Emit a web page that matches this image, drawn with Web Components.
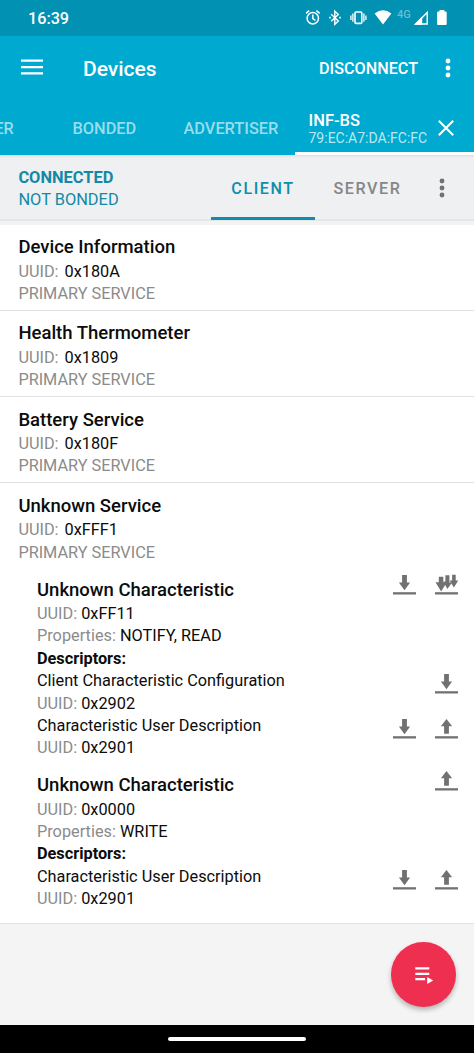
<!DOCTYPE html>
<html lang="en">
<head>
<meta charset="utf-8">
<title>Devices</title>
<style>
html,body{margin:0;padding:0}
body{width:474px;height:1053px;overflow:hidden;background:#f4f4f4;font-family:Roboto,sans-serif;color:#0c0c0c}
</style>
</head>
<body>
<ble-app></ble-app>
<script>
const define = (name, html) => customElements.define(name, class extends HTMLElement {
  constructor() {
    super();
    const t = document.createElement('template');
    t.innerHTML = html;
    this.attachShadow({mode: 'open'}).append(t.content.cloneNode(true));
  }
});

define('status-bar', `<style>
:host{display:flex;height:35.5px;background:#0091b3;color:#fff;align-items:center;box-sizing:border-box;padding-left:28px}
.time{flex:1;font-size:16.2px;font-weight:500;line-height:20px;padding-top:1.5px}
svg{display:block;width:168px;height:35px}
text{font:500 11px Roboto,sans-serif}
</style>
<span class="time">16:39</span>
<svg viewBox="306 0 168 35" fill="none" stroke="#fff">
  <g stroke-width="1.5"><circle cx="312.8" cy="18.3" r="5.7"/><path d="M312.8 14.6v4l2.6 1.7M305.9 13.4l3.3-2.8M319.7 13.4l-3.3-2.8"/></g>
  <path stroke-width="1.4" d="M331.2 14.3l7.1 6.8-3.5 3.3V11.2l3.5 3.3-7.1 6.8"/>
  <path stroke-width="1.6" d="M330 16.8v1.8M340 16.8v1.8"/>
  <rect x="355" y="12" width="6.8" height="11.4" rx="1" stroke-width="1.6"/>
  <path stroke-width="1.3" d="M352.9 13.6v8.2M363.9 13.6v8.2M350.9 15.4v4.6M365.9 15.4v4.6"/>
  <path fill="#fff" stroke="none" d="M374.6 13.6Q383 6.7 391.4 13.6L383 24.6z"/>
  <text x="397" y="18" fill="#6cbfd3" stroke="none">4G</text>
  <path stroke-width="1.4" d="M415.8 24L427.2 12.4V24z"/><path fill="#fff" stroke="none" d="M414 24.8L422.2 16.6V24.8z"/>
  <path fill="#fff" stroke="none" d="M439.5 10h4.8v1.5h1.4q1 0 1 1V24q0 1-1 1h-7.6q-1 0-1-1V12.500q0-1 1-1h1.400z"/>
</svg>`);

define('more-dots', `<style>:host{display:block;width:6px;height:20px}svg{display:block}</style>
<svg width="6" height="20" fill="currentColor"><circle cx="3" cy="3" r="2.450"/><circle cx="3" cy="10" r="2.450"/><circle cx="3" cy="17" r="2.450"/></svg>`);

define('app-toolbar', `<style>
:host{display:flex;height:65px;align-items:center;background:#00a9d0;color:#fff;padding:0 23px 0 21px;box-sizing:border-box;font-weight:500}
svg{margin-top:-2px}
.title{flex:1;margin-left:40px;font-size:21px;line-height:24px;padding-top:1px}
.action{font-size:16.200px;line-height:20px;padding-top:1.600px;margin-right:27px}
</style>
<svg width="22" height="16" fill="#fff"><path d="M0 .5h22v2.200H0zM0 7h22v2.200H0zM0 13.300h22v2.200H0z"/></svg>
<span class="title">Devices</span><span class="action">DISCONNECT</span><more-dots></more-dots>`);

define('device-tabs', `<style>
:host{display:flex;height:54.500px;background:#00a9d0;color:#98ddec;font-size:16.140px;overflow:hidden}
.tab{display:flex;align-items:center;line-height:20px;white-space:nowrap;padding-top:2px;box-sizing:border-box;font-weight:500}
.scan{width:72.500px;flex:none;justify-content:flex-start}
.er{margin-left:-5.500px}
.bonded{width:111px;flex:none}
.adv{flex:1;font-size:16.350px}
.bonded{font-size:16.350px}
.current{width:179px;flex:none;border-bottom:3px solid #fff;padding:0 20px 0 13.500px;justify-content:space-between}
.names{display:flex;flex-direction:column;padding-top:6px}
.name{font-size:16.500px;font-weight:500;color:#fff;line-height:18px}
.addr{font-size:14px;font-weight:400;line-height:17px;color:#b9e8f2}
svg{flex:none;margin-top:3px}
</style>
<div class="tab scan"><span class="er">ER</span></div>
<div class="tab bonded"><span>BONDED</span></div>
<div class="tab adv"><span>ADVERTISER</span></div>
<div class="tab current"><div class="names"><span class="name">INF-BS</span><span class="addr">79:EC:A7:DA:FC:FC</span></div>
<svg width="16" height="16" stroke="#fff" stroke-width="2.100"><path d="M.8.8l14.400 14.400M15.200.8L.8 15.200"/></svg></div>`);

define('connection-bar', `<style>
:host{display:flex;height:69.500px;box-sizing:border-box;border-bottom:4px solid #f3f3f3;background:linear-gradient(#dedfe0,#eef0f2 3px,#eff0f2 64px,#dcdddd 65px,#eee 66px);padding-left:18.400px;font-size:16.400px}
.state{width:192.300px;display:flex;flex-direction:column;color:#1489a6;padding-top:11.500px;line-height:22.400px}
b{font-weight:700}
.tab{height:65px;box-sizing:border-box;width:104.500px;display:flex;align-items:center;justify-content:center;font-size:16.140px;font-weight:500;letter-spacing:1.550px;color:#858688;padding-top:1.600px}
.on{color:#0d8eac;border-bottom:3.300px solid #0d8eac;padding-top:4.600px}
more-dots{color:#707173;margin:22.500px 0 0 19.200px}
</style>
<div class="state"><b>CONNECTED</b><span>NOT BONDED</span></div>
<div class="tab on">CLIENT</div><div class="tab">SERVER</div><more-dots></more-dots>`);

define('gatt-service', `<style>
:host{display:block;background:#fff;border-bottom:1px solid #e2e2e2;padding:10.600px 16.500px 4.400px 18.400px;font-size:16.300px;line-height:22.400px}
.name{font-size:18.500px;font-weight:500;line-height:25.400px}
.kind,.key{color:#8b8b8b}
.key{margin-right:6px}
</style>
<div class="name"><slot name="name"></slot></div>
<div><span class="key">UUID:</span><slot name="uuid"></slot></div>
<div class="kind">PRIMARY SERVICE</div>
<slot></slot>`);

define('gatt-characteristic', `<style>
:host{display:block;margin:13.600px 0 0 18.600px}
.head{display:flex;align-items:flex-start;justify-content:space-between;height:70.200px}
.actions{display:flex;gap:18.500px;margin-top:-2.500px}
.name{font-size:18.500px;font-weight:500;line-height:25.400px}
.key{color:#8b8b8b}
b{display:block;font-weight:700}
</style>
<div class="head"><div><div class="name">Unknown Characteristic</div>
<div><span class="key">UUID:</span> <slot name="uuid"></slot></div>
<div><span class="key">Properties:</span> <slot name="props"></slot></div></div>
<div class="actions"><slot name="actions"></slot></div></div>
<b>Descriptors:</b><slot></slot>`);

define('gatt-descriptor', `<style>
:host{display:flex;justify-content:space-between;align-items:flex-start;height:44.800px}
.key{color:#8b8b8b}
.actions{display:flex;gap:18.500px;margin-top:4px}
</style>
<div><div><slot name="name"></slot></div><div><span class="key">UUID:</span> <slot name="uuid"></slot></div></div>
<div class="actions"><slot></slot></div>`);

const icon = body => `<style>:host{display:block;width:23px;height:20px}svg{display:block;overflow:visible}</style>
<svg width="23" height="20" fill="#717171">${body}<path d="M0 17.200h23v2.300H0z"/></svg>`;
define('icon-read', icon('<path d="M9.100 0h4.800v7.500h3.200L11.500 15.300 5.900 7.500h3.200z"/>'));
define('icon-write', icon('<path d="M9.100 14.800h4.800V7.300h3.200L11.500 0 5.900 7.300h3.200z"/>'));
define('icon-notify', icon('<g><path d="M17.100-.3h3.600v5.700h2.500L18.900 12.400 14.600 5.400h2.500z"/><path d="M10.400.3h4v7.200h2.800L12.300 14 8.300 6.500h2.100z"/><path d="M3.800 1.700h4.500V7.300h3.400L6.200 16.500.5 7.300h3.300z"/></g>'));

define('play-fab', `<style>
:host{position:absolute;right:18.400px;bottom:46.300px;width:64.600px;height:64.600px;border-radius:50%;background:#ef2f50;box-shadow:0 3px 5px #0004}
svg{display:block}
</style>
<svg width="64.600" height="64.600" viewBox="391 942 64.600 64.600" fill="#fff"><path d="M415.300 967.200h14v2.300h-14zM415.300 972.700h14v2.300h-14zM415.300 977.900h9.800v2.300h-9.800zM427.200 977l6 3.500-6 3.600z"/></svg>`);

define('nav-bar', `<style>
:host{position:absolute;left:0;right:0;bottom:0;height:28px;background:#000;display:flex;align-items:center;justify-content:center}
i{display:block;width:138px;height:4.600px;border-radius:3px;background:#fff}
</style><i></i>`);

define('ble-app', `<style>
:host{display:block;position:relative;width:474px;height:1053px;overflow:hidden;background:#f4f4f4}
</style>
<status-bar></status-bar><app-toolbar></app-toolbar><device-tabs></device-tabs><connection-bar></connection-bar>
<gatt-service><span slot="name">Device Information</span><span slot="uuid">0x180A</span></gatt-service>
<gatt-service><span slot="name">Health Thermometer</span><span slot="uuid">0x1809</span></gatt-service>
<gatt-service><span slot="name">Battery Service</span><span slot="uuid">0x180F</span></gatt-service>
<gatt-service style="padding-bottom:12.200px"><span slot="name">Unknown Service</span><span slot="uuid">0xFFF1</span>
<gatt-characteristic><span slot="uuid">0xFF11</span><span slot="props">NOTIFY, READ</span><icon-read slot="actions"></icon-read><icon-notify slot="actions"></icon-notify>
<gatt-descriptor><span slot="name">Client Characteristic Configuration</span><span slot="uuid">0x2902</span><icon-read></icon-read></gatt-descriptor>
<gatt-descriptor><span slot="name">Characteristic User Description</span><span slot="uuid">0x2901</span><icon-read></icon-read><icon-write></icon-write></gatt-descriptor>
</gatt-characteristic>
<gatt-characteristic><span slot="uuid">0x0000</span><span slot="props">WRITE</span><icon-write slot="actions"></icon-write>
<gatt-descriptor><span slot="name">Characteristic User Description</span><span slot="uuid">0x2901</span><icon-read></icon-read><icon-write></icon-write></gatt-descriptor>
</gatt-characteristic>
</gatt-service>
<play-fab></play-fab><nav-bar></nav-bar>`);
</script>
</body>
</html>
